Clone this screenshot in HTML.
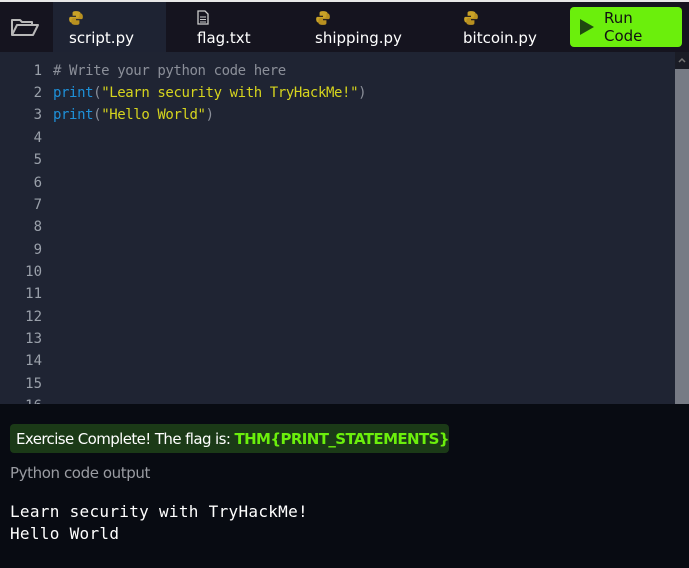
<!DOCTYPE html>
<html><head><meta charset="utf-8"><style>
*{margin:0;padding:0;box-sizing:border-box}
body{width:689px;height:568px;overflow:hidden;background:#080b12;font-family:"Liberation Sans","DejaVu Sans",sans-serif;position:relative}
.top{position:absolute;left:0;top:0;width:689px;height:2px;background:#e8e8e8}
.bar{position:absolute;left:0;top:2px;width:689px;height:50px;background:#15141f}
.tab{position:absolute;top:2px;height:50px;color:#fff;font-size:15px;font-family:"DejaVu Sans",sans-serif}
.tab span{position:absolute;top:27px;white-space:nowrap}
.tab svg{position:absolute;top:8px}
.editor{position:absolute;left:0;top:52px;width:689px;height:352px;background:#1f2433;overflow:hidden}
.ln{position:absolute;left:0;width:42px;text-align:right;color:#9aa0aa;font-family:"DejaVu Sans Mono",monospace;font-size:14px}
.code{position:absolute;left:53px;font-family:"DejaVu Sans Mono",monospace;font-size:14px;color:#8b8f99;white-space:pre;letter-spacing:-0.4px}
.kw{color:#1e90d8}.st{color:#d6d41e}
.sb{position:absolute;left:675px;top:52px;width:14px;height:352px;background:#777b85}
.sbt{position:absolute;left:675px;top:52px;width:14px;height:17px;background:#1a1c26}
.flag{position:absolute;left:10px;top:424px;width:439px;height:29px;background:#1b3a17;border-radius:4px;color:#fff;font-size:15px;font-family:"DejaVu Sans",sans-serif;padding:6px 0 0 6px;white-space:nowrap;letter-spacing:-0.6px}
.flag b{color:#6bef0c}
.out{position:absolute;left:10px;top:464px;color:#9a9ca2;font-size:15px;font-family:"DejaVu Sans",sans-serif;letter-spacing:-0.4px}
.res{position:absolute;left:10px;top:501px;color:#fff;font-family:"DejaVu Sans Mono",monospace;font-size:16px;line-height:22px;white-space:pre;letter-spacing:0.3px}
</style></head><body>
<div class="top"></div>
<div class="bar"></div>
<svg style="position:absolute;left:10px;top:17px" width="30" height="20" viewBox="0 0 30 20"><path d="M2 18 V3 h8 l2 2 h10 v3 M2 18 L7 8 H28 L23 18 Z" fill="none" stroke="#b8b8b8" stroke-width="2" stroke-linejoin="round"/></svg>
<div class="tab" style="left:53px;width:113px;background:#1e2333"><svg style="left:15px" width="16" height="16" viewBox="0 0 14 14"><path d="M7 1C4 1 4 2 4 3v2h3v1H2C1 6 1 8 1 8c0 2 1 3 2 3h1V9c0-1 1-2 2-2h3c1 0 2-1 2-2V3c0-1-1-2-4-2z" fill="#c9a227"/><path d="M7 13c3 0 3-1 3-2V9H7V8h5c1 0 1-2 1-2 0-2-1-3-2-3h-1v2c0 1-1 2-2 2H5C4 7 3 8 3 9v2c0 1 1 2 4 2z" fill="#b89020"/></svg><span style="left:16px">script.py</span></div>
<div class="tab" style="left:170px;width:120px"><svg style="left:27px" width="12" height="15" viewBox="0 0 12 15"><path d="M1 1h7l3 3v10H1z" fill="none" stroke="#ccc" stroke-width="1.3"/><path d="M3 7h6M3 9.5h6M3 12h6" stroke="#ccc"/></svg><span style="left:27px">flag.txt</span></div>
<div class="tab" style="left:300px;width:130px"><svg style="left:15px" width="16" height="16" viewBox="0 0 14 14"><path d="M7 1C4 1 4 2 4 3v2h3v1H2C1 6 1 8 1 8c0 2 1 3 2 3h1V9c0-1 1-2 2-2h3c1 0 2-1 2-2V3c0-1-1-2-4-2z" fill="#c9a227"/><path d="M7 13c3 0 3-1 3-2V9H7V8h5c1 0 1-2 1-2 0-2-1-3-2-3h-1v2c0 1-1 2-2 2H5C4 7 3 8 3 9v2c0 1 1 2 4 2z" fill="#b89020"/></svg><span style="left:15px">shipping.py</span></div>
<div class="tab" style="left:450px;width:110px"><svg style="left:13px" width="16" height="16" viewBox="0 0 14 14"><path d="M7 1C4 1 4 2 4 3v2h3v1H2C1 6 1 8 1 8c0 2 1 3 2 3h1V9c0-1 1-2 2-2h3c1 0 2-1 2-2V3c0-1-1-2-4-2z" fill="#c9a227"/><path d="M7 13c3 0 3-1 3-2V9H7V8h5c1 0 1-2 1-2 0-2-1-3-2-3h-1v2c0 1-1 2-2 2H5C4 7 3 8 3 9v2c0 1 1 2 4 2z" fill="#b89020"/></svg><span style="left:13px">bitcoin.py</span></div>
<div style="position:absolute;left:570px;top:7px;width:112px;height:40px;background:#6bef0c;border-radius:4px">
<svg style="position:absolute;left:10px;top:12px" width="14" height="16"><path d="M0 0L14 8L0 16Z" fill="#1f4a10"/></svg>
<div style="position:absolute;left:34px;top:2px;font-size:15px;line-height:18px;color:#111;font-family:'DejaVu Sans',sans-serif">Run<br>Code</div></div>
<div class="editor">
<div class="ln" style="top:11px">1</div><div class="ln" style="top:33px">2</div><div class="ln" style="top:55px">3</div><div class="ln" style="top:78px">4</div><div class="ln" style="top:100px">5</div><div class="ln" style="top:123px">6</div><div class="ln" style="top:145px">7</div><div class="ln" style="top:167px">8</div><div class="ln" style="top:190px">9</div><div class="ln" style="top:212px">10</div><div class="ln" style="top:234px">11</div><div class="ln" style="top:257px">12</div><div class="ln" style="top:279px">13</div><div class="ln" style="top:301px">14</div><div class="ln" style="top:324px">15</div><div class="ln" style="top:346px">16</div>
<div class="code" style="top:11px"># Write your python code here</div>
<div class="code" style="top:33px"><span class="kw">print</span>(<span class="st">"Learn security with TryHackMe!"</span>)</div>
<div class="code" style="top:55px"><span class="kw">print</span>(<span class="st">"Hello World"</span>)</div>
</div>
<div class="sb"></div><div class="sbt"><svg width="14" height="17"><path d="M4 10L7 7L10 10" stroke="#777" stroke-width="1.5" fill="none"/></svg></div>
<div class="flag">Exercise Complete! The flag is: <b>THM{PRINT_STATEMENTS}</b></div>
<div class="out">Python code output</div>
<div class="res">Learn security with TryHackMe!
Hello World</div>
</body></html>
